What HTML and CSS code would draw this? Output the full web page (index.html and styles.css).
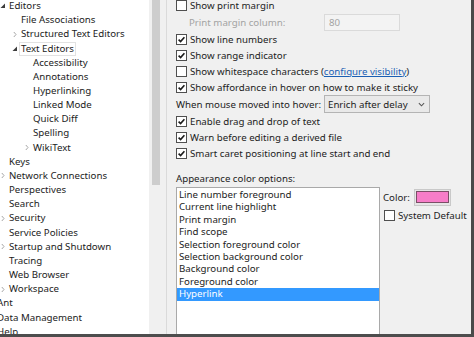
FILE: index.html
```html
<!DOCTYPE html>
<html>
<head>
<meta charset="utf-8">
<link rel="stylesheet" href="styles.css">
</head>
<body>
<div class="window">
  <div class="main">
    <div class="tree">
      <div class="row l1"><span class="tw"><svg class="exp" viewBox="0 0 6 6"><path d="M5 0.5V5H0.5Z"/></svg></span>Editors</div>
      <div class="row l2"><span class="tw"></span>File Associations</div>
      <div class="row l2"><span class="tw"><svg class="col" viewBox="0 0 4 7"><path d="M0.8 1L3 3.5L0.8 6"/></svg></span>Structured Text Editors</div>
      <div class="row l2"><span class="tw"><svg class="exp" viewBox="0 0 6 6"><path d="M5 0.5V5H0.5Z"/></svg></span><span class="sel">Text Editors</span></div>
      <div class="row l3"><span class="tw"></span>Accessibility</div>
      <div class="row l3"><span class="tw"></span>Annotations</div>
      <div class="row l3"><span class="tw"></span>Hyperlinking</div>
      <div class="row l3"><span class="tw"></span>Linked Mode</div>
      <div class="row l3"><span class="tw"></span>Quick Diff</div>
      <div class="row l3"><span class="tw"></span>Spelling</div>
      <div class="row l3"><span class="tw"><svg class="col" viewBox="0 0 4 7"><path d="M0.8 1L3 3.5L0.8 6"/></svg></span>WikiText</div>
      <div class="row l1"><span class="tw"></span>Keys</div>
      <div class="row l1"><span class="tw"><svg class="col" viewBox="0 0 4 7"><path d="M0.8 1L3 3.5L0.8 6"/></svg></span>Network Connections</div>
      <div class="row l1"><span class="tw"></span>Perspectives</div>
      <div class="row l1"><span class="tw"></span>Search</div>
      <div class="row l1"><span class="tw"><svg class="col" viewBox="0 0 4 7"><path d="M0.8 1L3 3.5L0.8 6"/></svg></span>Security</div>
      <div class="row l1"><span class="tw"></span>Service Policies</div>
      <div class="row l1"><span class="tw"><svg class="col" viewBox="0 0 4 7"><path d="M0.8 1L3 3.5L0.8 6"/></svg></span>Startup and Shutdown</div>
      <div class="row l1"><span class="tw"></span>Tracing</div>
      <div class="row l1"><span class="tw"></span>Web Browser</div>
      <div class="row l1"><span class="tw"><svg class="col" viewBox="0 0 4 7"><path d="M0.8 1L3 3.5L0.8 6"/></svg></span>Workspace</div>
      <div class="row l0"><span class="tw"></span>Ant</div>
      <div class="row l0"><span class="tw"></span>Data Management</div>
      <div class="row l0"><span class="tw"></span>Help</div>
    </div>
    <div class="scroll"><div class="thumb"></div></div>
    <div class="gutter"></div>
    <div class="panel">
      <div class="opt"><span class="cb"></span>Show print margin</div>
      <div class="field">
        <span class="flabel dis">Print margin column:</span>
        <span class="input dis">80</span>
      </div>
      <div class="opt"><span class="cb on"><svg viewBox="0 0 9 9"><path d="M1.6 4.6L3.6 6.6L7.4 2.2"/></svg></span>Show line numbers</div>
      <div class="opt"><span class="cb on"><svg viewBox="0 0 9 9"><path d="M1.6 4.6L3.6 6.6L7.4 2.2"/></svg></span>Show range indicator</div>
      <div class="opt"><span class="cb"></span>Show whitespace characters (<span class="link">configure visibility</span>)</div>
      <div class="opt"><span class="cb on"><svg viewBox="0 0 9 9"><path d="M1.6 4.6L3.6 6.6L7.4 2.2"/></svg></span>Show affordance in hover on how to make it sticky</div>
      <div class="field">
        <span class="slabel">When mouse moved into hover:</span>
        <span class="select">Enrich after delay<svg viewBox="0 0 8 5"><path d="M1 1L4 4L7 1"/></svg></span>
      </div>
      <div class="opt"><span class="cb on"><svg viewBox="0 0 9 9"><path d="M1.6 4.6L3.6 6.6L7.4 2.2"/></svg></span>Enable drag and drop of text</div>
      <div class="opt"><span class="cb on"><svg viewBox="0 0 9 9"><path d="M1.6 4.6L3.6 6.6L7.4 2.2"/></svg></span>Warn before editing a derived file</div>
      <div class="opt"><span class="cb on"><svg viewBox="0 0 9 9"><path d="M1.6 4.6L3.6 6.6L7.4 2.2"/></svg></span>Smart caret positioning at line start and end</div>
      <div class="heading">Appearance color options:</div>
      <div class="appearance">
        <div class="list">
          <div class="item">Line number foreground</div>
          <div class="item">Current line highlight</div>
          <div class="item">Print margin</div>
          <div class="item">Find scope</div>
          <div class="item">Selection foreground color</div>
          <div class="item">Selection background color</div>
          <div class="item">Background color</div>
          <div class="item">Foreground color</div>
          <div class="item active">Hyperlink</div>
        </div>
        <div class="side">
          <div class="colorrow"><span>Color:</span><span class="cbtn"><span class="swatch"></span></span></div>
          <div class="sysdef"><span class="cb"></span>System Default</div>
        </div>
      </div>
    </div>
    <div class="edge"></div>
  </div>
  <div class="bottom"></div>
</div>
</body>
</html>
```
FILE: styles.css
```css
* { box-sizing: border-box; }
html, body { margin: 0; padding: 0; }
body {
  width: 474px;
  height: 337px;
  overflow: hidden;
  font-family: "Noto Sans", "Open Sans", sans-serif;
  font-size: 9.7px;
  color: #1c1c1c;
  background: #f0f0f0;
}
.window { display: flex; flex-direction: column; width: 474px; height: 337px; }
.main { display: flex; height: 334px; overflow: hidden; }
.bottom { height: 3px; background: #4d4d4d; }

.tree {
  width: 149px;
  flex: none;
  background: #fff;
  overflow: hidden;
  margin-top: -1px;
}
.row {
  display: flex;
  align-items: center;
  height: 14.17px;
  line-height: 12px;
  white-space: nowrap;
}
.l0 { margin-left: -15px; }
.l1 { margin-left: -3px; }
.l2 { margin-left: 9px; }
.l3 { margin-left: 21px; }
.tw { width: 12px; flex: none; display: flex; align-items: center; justify-content: center; }
.exp { width: 6px; height: 6px; fill: #3c3c3c; }
.col { width: 4px; height: 7px; fill: none; stroke: #a6a6a6; stroke-width: 1; }
.sel { outline: 1px solid #e2e2e2; padding: 0 1px; margin-left: -1px; }

.scroll { width: 12px; flex: none; background: #f0f0f0; padding-left: 3px; padding-right: 1px; }
.thumb { height: 185px; background: #cdcdcd; }
.gutter { width: 6px; flex: none; background: #f0f0f0; border-right: 1px solid #dadada; }

.panel {
  width: 304px;
  flex: none;
  background: #f0f0f0;
  padding-left: 9px;
  margin-top: -3px;
  overflow: hidden;
}
.edge { width: 3px; flex: none; background: #4a4a4a; }

.opt { display: flex; align-items: center; height: 16px; white-space: nowrap; }
.cb {
  width: 11px; height: 11px; flex: none;
  border: 1px solid #4f4f4f;
  background: #fff;
  margin-right: 3px;
  display: flex; align-items: center; justify-content: center;
}
.cb svg { width: 9px; height: 9px; fill: none; stroke: #1a1a1a; stroke-width: 1.6; }
.link { color: #1a5fb4; text-decoration: underline; }

.field { display: flex; align-items: center; height: 18px; white-space: nowrap; }
.flabel { width: 148px; padding-left: 13px; flex: none; }
.slabel { width: 148px; flex: none; }
.dis { color: #a3a3a3; }
.input {
  width: 76px; height: 17px;
  border: 1px solid #dadada;
  background: #f3f3f3;
  padding-left: 4px;
  display: flex; align-items: center;
}
.select {
  width: 106px; height: 18px;
  border: 1px solid #b4b4b4;
  background: #e9e9e9;
  padding-left: 3px; padding-right: 4px;
  display: flex; align-items: center; justify-content: space-between;
}
.select svg { width: 7px; height: 5px; fill: none; stroke: #555; stroke-width: 1.2; }

.heading { height: 16px; margin-top: 9px; display: flex; align-items: center; }
.appearance { display: flex; margin-top: 1px; }
.list {
  width: 204px; height: 160px; flex: none;
  border: 1px solid #a9a9a9;
  background: #fff;
  padding-top: 1px;
}
.item { height: 12.4px; line-height: 12.4px; padding-left: 2px; white-space: nowrap; }
.item.active { background: #3399ff; color: #fff; }
.side { padding-left: 3px; padding-top: 1px; }
.colorrow { display: flex; align-items: center; height: 18px; white-space: nowrap; }
.cbtn {
  margin-left: 4px;
  width: 37px; height: 17px;
  border: 1px solid #c9c9c9;
  background: #e6e6e6;
  display: flex; align-items: center; justify-content: center;
}
.swatch { width: 33px; height: 12px; background: #f77dc8; border: 1px solid #7a4f66; }
.sysdef { display: flex; align-items: center; height: 16px; margin-top: 1px; white-space: nowrap; }
.sysdef .cb { margin-left: 1px; }
```
